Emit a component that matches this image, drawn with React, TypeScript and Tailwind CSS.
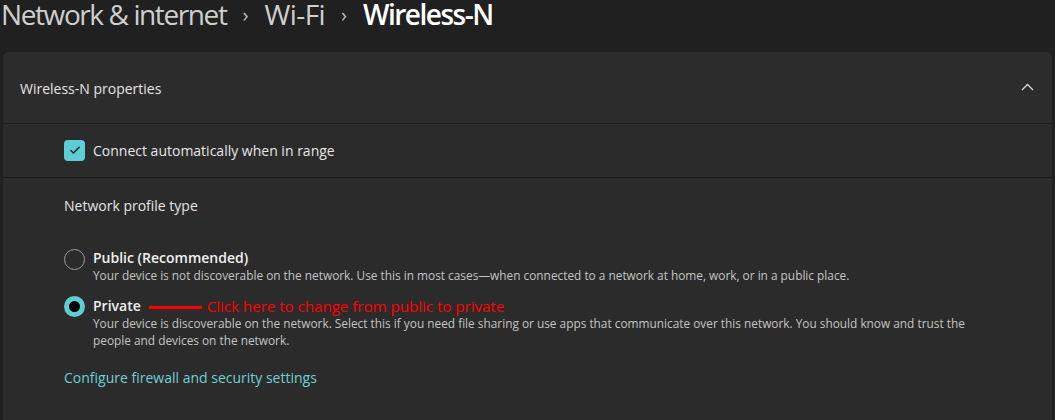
import React from "react";

const font = { fontFamily: '"Open Sans", "Noto Sans", sans-serif' };

export default function App() {
  return (
    <div
      className="w-[1055px] h-[420px] bg-[#202020] overflow-hidden flex flex-col"
      style={font}
    >
      <div className="h-[51px] pl-[1px] flex items-start text-[28px] leading-[28px]">
        <span className="text-[#cfcfcf] tracking-[-1.4px]">Network &amp; internet</span>
        <span className="text-[#bdbdbd] text-[20px] mx-[16px] mt-[1px]">›</span>
        <span className="text-[#cfcfcf] tracking-[-0.6px]">Wi-Fi</span>
        <span className="text-[#bdbdbd] text-[20px] mx-[16px] mt-[1px]">›</span>
        <span className="text-white font-semibold tracking-[-1.5px]">Wireless-N</span>
      </div>
      <div className="ml-[3px] w-[1049px] flex-1 mt-[1px] rounded-t-[6px] bg-[#2b2b2b] flex flex-col overflow-hidden">
        <div className="h-[71px] bg-[#2c2c2d] flex items-center justify-between pl-[17px] pr-[18px] text-[14px] text-[#e4e4e4]">
          <span className="mt-[2px]">Wireless-N properties</span>
          <svg width="13" height="8" viewBox="0 0 13 8" className="-mt-[1px]">
            <path d="M1 7 L6.5 1.5 L12 7" fill="none" stroke="#d8d8d8" strokeWidth="1.3" />
          </svg>
        </div>
        <div className="h-px bg-[#1e1e1e]" />
        <div className="h-[53px] flex items-center pl-[61px] gap-[8px] text-[14px] text-[#e6e6e6]">
          <div className="w-[21px] h-[21px] rounded-[4px] bg-[#5fcdd6] flex items-center justify-center mt-[-1px]">
            <svg width="12" height="10" viewBox="0 0 12 10">
              <path d="M1.5 5.2 L4.5 8 L10.5 1.8" fill="none" stroke="#1c1c1c" strokeWidth="1.4" />
            </svg>
          </div>
          <span className="mt-[-1px]">Connect automatically when in range</span>
        </div>
        <div className="h-px bg-[#1e1e1e]" />
        <div className="pl-[61px] pt-[1px] flex flex-col">
          <div className="h-[55px] flex items-center text-[14px] text-[#e4e4e4]">
            <span className="mt-[-2px]">Network profile type</span>
          </div>
          <div className="mt-[15px] flex gap-[8px]">
            <div className="w-[21px] h-[21px] rounded-full border border-[#9c9c9c] shrink-0" />
            <div className="flex flex-col">
              <span className="text-[14px] font-semibold text-[#f0f0f0] leading-[18px]">
                Public (Recommended)
              </span>
              <span className="text-[11.85px] text-[#c4c4c4] leading-[17px]">
                Your device is not discoverable on the network. Use this in most cases—when connected to a network at home, work, or in a public place.
              </span>
            </div>
          </div>
          <div className="mt-[13px] flex gap-[8px]">
            <div className="w-[21px] h-[21px] rounded-full bg-[#5fcdd6] -mt-[1px] shrink-0 flex items-center justify-center">
              <div className="w-[11px] h-[11px] rounded-full bg-black" />
            </div>
            <div className="flex flex-col">
              <div className="flex items-center leading-[18px]">
                <span className="text-[14px] font-semibold text-[#f0f0f0]">Private</span>
                <div className="ml-[8px] w-[53px] h-[3px] bg-[#ff0000] mt-[3px]" />
                <span className="ml-[5px] text-[15.3px] text-[#ff0000] tracking-[-0.1px]">
                  Click here to change from public to private
                </span>
              </div>
              <span className="text-[11.85px] text-[#c4c4c4] leading-[17px]">
                Your device is discoverable on the network. Select this if you need file sharing or use apps that communicate over this network. You should know and trust the
                <br />
                people and devices on the network.
              </span>
            </div>
          </div>
          <div className="mt-[19px] text-[14px] leading-[20px] text-[#6fcfd8]">
            Configure firewall and security settings
          </div>
        </div>
      </div>
    </div>
  );
}
